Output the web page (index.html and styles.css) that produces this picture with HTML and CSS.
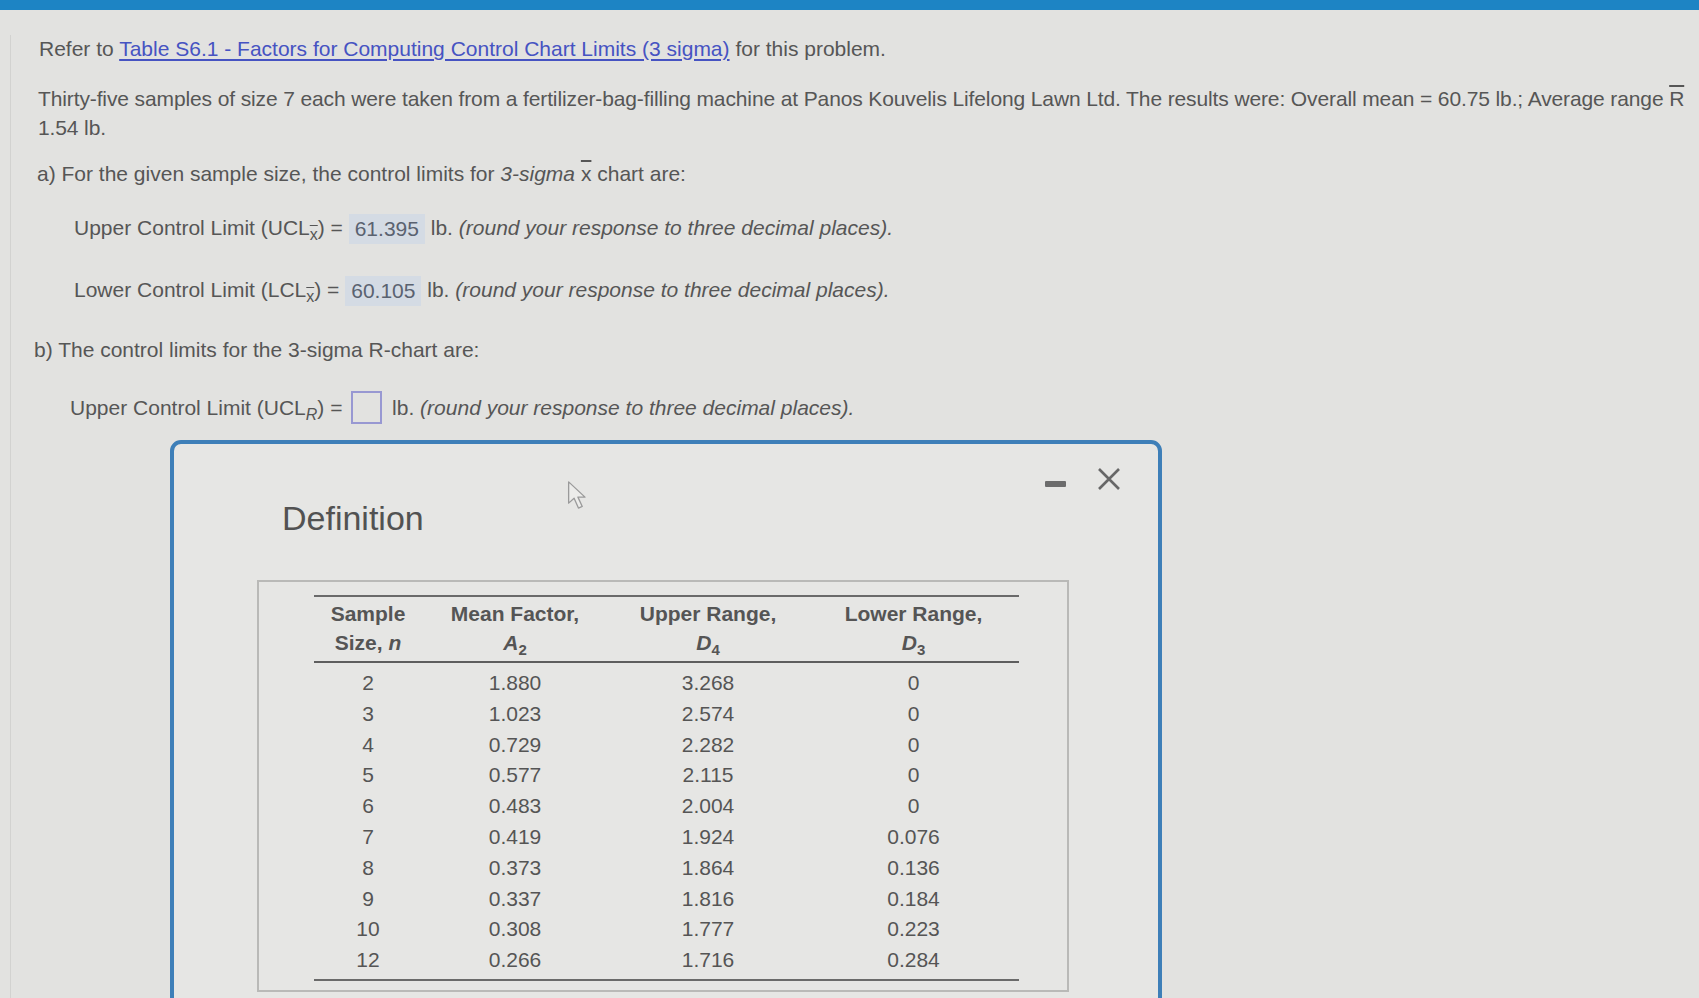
FILE: index.html
```html
<!DOCTYPE html>
<html lang="en">
<head>
<meta charset="utf-8">
<title>Control Chart Limits</title>
<link rel="stylesheet" href="styles.css">
</head>
<body>
<div class="topbar"></div>
<div class="page">
  <p class="intro">Refer to <a class="link" href="#">Table S6.1 - Factors for Computing Control Chart Limits (3 sigma)</a> for this problem.</p>
  <p class="problem">Thirty-five samples of size 7 each were taken from a fertilizer-bag-filling machine at Panos Kouvelis Lifelong Lawn Ltd. The results were: Overall mean = 60.75 lb.; Average range <span class="bar">R</span><br>1.54 lb.</p>

  <p class="part-a">a) For the given sample size, the control limits for <i>3-sigma</i> <span class="bar">x</span> chart are:</p>
  <p class="limit limit-ucl">Upper Control Limit (UCL<sub><span class="bar">x</span></sub>) = <span class="answer">61.395</span> lb. <i>(round your response to three decimal places).</i></p>
  <p class="limit limit-lcl">Lower Control Limit (LCL<sub><span class="bar">x</span></sub>) = <span class="answer">60.105</span> lb. <i>(round your response to three decimal places).</i></p>

  <p class="part-b">b) The control limits for the 3-sigma R-chart are:</p>
  <p class="limit limit-uclr">Upper Control Limit (UCL<sub><i>R</i></sub>) = <span class="blank"></span> lb. <i>(round your response to three decimal places).</i></p>

  <div class="dialog">
    <div class="dlg-head">
      <h2 class="dlg-title">Definition</h2>
      <div class="dlg-controls">
        <span class="ctl-min"></span>
        <svg class="ctl-close" width="24" height="24" viewBox="0 0 24 24"><path d="M2 2 L22 22 M22 2 L2 22" stroke="#676767" stroke-width="2.6" fill="none"/></svg>
      </div>
    </div>
    <svg class="cursor" width="24" height="31" viewBox="0 0 22 28"><path d="M1.5 1.5 L1.5 21 L6.5 16.5 L10.5 25.5 L14 24 L10 15.5 L16.5 15.5 Z" fill="#ececea" stroke="#9a9a9a" stroke-width="1.2" stroke-linejoin="round"/></svg>
    <div class="table-box">
      <table class="factors">
        <thead>
          <tr>
            <th class="c1">Sample<br>Size, <i>n</i></th>
            <th class="c2">Mean Factor,<br><i>A</i><sub>2</sub></th>
            <th class="c3">Upper Range,<br><i>D</i><sub>4</sub></th>
            <th class="c4">Lower Range,<br><i>D</i><sub>3</sub></th>
          </tr>
        </thead>
        <tbody>
          <tr><td>2</td><td>1.880</td><td>3.268</td><td>0</td></tr>
          <tr><td>3</td><td>1.023</td><td>2.574</td><td>0</td></tr>
          <tr><td>4</td><td>0.729</td><td>2.282</td><td>0</td></tr>
          <tr><td>5</td><td>0.577</td><td>2.115</td><td>0</td></tr>
          <tr><td>6</td><td>0.483</td><td>2.004</td><td>0</td></tr>
          <tr><td>7</td><td>0.419</td><td>1.924</td><td>0.076</td></tr>
          <tr><td>8</td><td>0.373</td><td>1.864</td><td>0.136</td></tr>
          <tr><td>9</td><td>0.337</td><td>1.816</td><td>0.184</td></tr>
          <tr><td>10</td><td>0.308</td><td>1.777</td><td>0.223</td></tr>
          <tr><td>12</td><td>0.266</td><td>1.716</td><td>0.284</td></tr>
        </tbody>
      </table>
    </div>
  </div>
</div>
</body>
</html>
```

FILE: styles.css
```css
html, body {
  margin: 0;
  padding: 0;
  overflow: hidden;
  height: 100%;
}
body {
  background: #e2e2e0;
  font-family: "Liberation Sans", Arial, sans-serif;
  color: #565656;
  font-size: 21px;
}
.topbar {
  height: 10px;
  background: #1d84c4;
}
.page {
  margin-left: 10px;
  border-left: 1px solid #d2d2d0;
  padding-left: 26px;
  min-height: 988px;
}
p {
  margin: 0;
  height: 28px;
  line-height: 28px;
  white-space: nowrap;
}
.intro {
  margin-top: 25px;
  padding-left: 2px;
}
.link {
  color: #4653c2;
  text-decoration: underline;
  text-underline-offset: 3px;
}
.problem {
  margin-top: 21px;
  padding-left: 1px;
  height: 58px;
  line-height: 29px;
  letter-spacing: -0.12px;
}
.bar {
  text-decoration: overline;
}
.part-a {
  margin-top: 18px;
}
.limit {
  margin-left: 37px;
}
.limit-ucl {
  margin-top: 26px;
}
.limit-lcl {
  margin-top: 34px;
}
.part-b {
  margin-top: 32px;
  margin-left: -3px;
}
.limit-uclr {
  margin-top: 27px;
  margin-left: 33px;
}
sub {
  font-size: 16px;
  line-height: 0;
  vertical-align: -5px;
}
.answer {
  display: inline-block;
  background: #d4dbe4;
  color: #5a6270;
  padding: 0 6px;
  height: 30px;
  line-height: 30px;
  vertical-align: -1px;
}
.blank {
  display: inline-block;
  width: 27px;
  height: 29px;
  margin: 0 4px 0 3px;
  border: 2px solid #9898d2;
  vertical-align: -9px;
}
.dialog {
  position: relative;
  margin-top: 21px;
  margin-left: 133px;
  width: 984px;
  height: 620px;
  border: 4px solid #3e7fb8;
  border-radius: 11px;
  background: #e6e6e4;
}
.dlg-head {
  display: flex;
  justify-content: space-between;
  align-items: flex-start;
  padding: 23px 37px 0 108px;
}
.dlg-title {
  margin: 31px 0 0 0;
  font-weight: normal;
  font-size: 34px;
  line-height: 40px;
  color: #525252;
}
.dlg-controls {
  display: flex;
  align-items: center;
  gap: 31px;
}
.ctl-min {
  width: 21px;
  height: 6px;
  border-radius: 1px;
  background: #6c6c6c;
  margin-top: 10px;
}
.cursor {
  position: absolute;
  left: 393px;
  top: 36px;
}
.table-box {
  margin: 42px 0 0 83px;
  width: 812px;
  height: 412px;
  border: 2px solid #b9b9b7;
  padding: 13px 0 0 55px;
  box-sizing: border-box;
}
.factors {
  width: 705px;
  border-collapse: collapse;
  border-top: 2px solid #6a6a6a;
  border-bottom: 2px solid #6a6a6a;
  font-size: 21px;
  color: #555;
}
.factors th {
  font-weight: bold;
  line-height: 29px;
  padding: 2px 0 4px 0;
  border-bottom: 2.5px solid #5e5e5e;
}
.factors .c1 { width: 108px; }
.factors .c2 { width: 186px; }
.factors .c3 { width: 200px; }
.factors .c4 { width: 211px; }
.factors th sub {
  font-size: 15px;
  vertical-align: -5px;
}
.factors td {
  text-align: center;
  line-height: 30.8px;
  padding: 0;
}
.factors tbody tr:first-child td {
  padding-top: 5px;
}
.factors tbody tr:last-child td {
  padding-bottom: 3px;
}
```
